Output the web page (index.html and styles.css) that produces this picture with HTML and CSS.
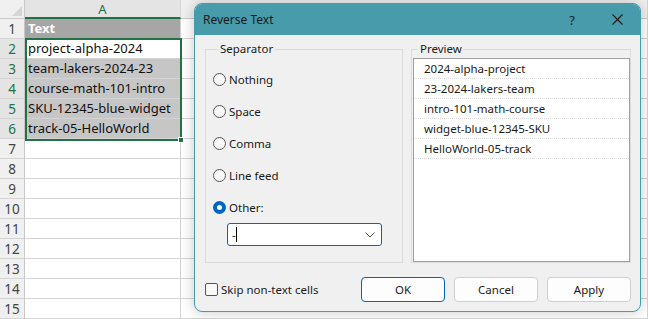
FILE: index.html
```html
<!DOCTYPE html>
<html lang="en">
<head>
  <meta charset="UTF-8">
  <title>Reverse Text</title>
  <link rel="stylesheet" href="styles.css">
</head>
<body>
  <!-- Worksheet -->
  <div class="sheet">
    <div class="corner"><svg width="10" height="10" viewBox="0 0 10 10"><path d="M10 0 L10 10 L0 10 Z" fill="#d6d6d6"/></svg></div>
    <div class="colhead sel">A</div>
    <div class="colhead"></div>

    <div class="rowhead">1</div><div class="cell head">Text</div><div class="cell"></div>
    <div class="rowhead sel">2</div><div class="cell">project-alpha-2024</div><div class="cell"></div>
    <div class="rowhead sel">3</div><div class="cell hl">team-lakers-2024-23</div><div class="cell"></div>
    <div class="rowhead sel">4</div><div class="cell hl">course-math-101-intro</div><div class="cell"></div>
    <div class="rowhead sel">5</div><div class="cell hl">SKU-12345-blue-widget</div><div class="cell"></div>
    <div class="rowhead sel">6</div><div class="cell hl">track-05-HelloWorld</div><div class="cell"></div>
    <div class="rowhead">7</div><div class="cell"></div><div class="cell"></div>
    <div class="rowhead">8</div><div class="cell"></div><div class="cell"></div>
    <div class="rowhead">9</div><div class="cell"></div><div class="cell"></div>
    <div class="rowhead">10</div><div class="cell"></div><div class="cell"></div>
    <div class="rowhead">11</div><div class="cell"></div><div class="cell"></div>
    <div class="rowhead">12</div><div class="cell"></div><div class="cell"></div>
    <div class="rowhead">13</div><div class="cell"></div><div class="cell"></div>
    <div class="rowhead">14</div><div class="cell"></div><div class="cell"></div>
    <div class="rowhead">15</div><div class="cell"></div><div class="cell"></div>
  </div>
  <div class="selection"><span class="fill-handle"></span></div>

  <!-- Dialog -->
  <div class="dialog">
    <div class="titlebar">
      <span class="title">Reverse Text</span>
      <span class="help">?</span>
      <span class="close">
        <svg width="11" height="11" viewBox="0 0 11 11"><path d="M0.5 0.5 L10.5 10.5 M10.5 0.5 L0.5 10.5" stroke="#1a1a1a" stroke-width="1.1" fill="none"/></svg>
      </span>
    </div>
    <div class="dialog-body">
      <div class="groups">
        <fieldset class="group separator">
          <legend>Separator</legend>
          <label class="radio"><span class="dot"></span>Nothing</label>
          <label class="radio"><span class="dot"></span>Space</label>
          <label class="radio"><span class="dot"></span>Comma</label>
          <label class="radio"><span class="dot"></span>Line feed</label>
          <label class="radio"><span class="dot on"></span>Other:</label>
          <div class="combo">
            <span class="combo-text">-<span class="caret"></span></span>
            <svg width="10" height="6" viewBox="0 0 10 6"><path d="M0.5 0.5 L5 5 L9.5 0.5" stroke="#555" stroke-width="1" fill="none"/></svg>
          </div>
        </fieldset>
        <fieldset class="group preview">
          <legend>Preview</legend>
          <ul class="listbox">
            <li>2024-alpha-project</li>
            <li>23-2024-lakers-team</li>
            <li>intro-101-math-course</li>
            <li>widget-blue-12345-SKU</li>
            <li>HelloWorld-05-track</li>
          </ul>
        </fieldset>
      </div>
      <div class="footer">
        <label class="check"><span class="box"></span>Skip non-text cells</label>
        <div class="buttons">
          <button class="btn default">OK</button>
          <button class="btn">Cancel</button>
          <button class="btn">Apply</button>
        </div>
      </div>
    </div>
  </div>
</body>
</html>
```

FILE: styles.css
```css
/* Sheet and dialog */
* {
  box-sizing: border-box;
}
body {
  margin: 0;
  width: 648px;
  height: 319px;
  overflow: hidden;
  position: relative;
  background: #fff;
  font-family: "Noto Sans", sans-serif;
}

/* Worksheet grid */
.sheet {
  display: grid;
  grid-template-columns: 25px 156px 1fr;
  grid-template-rows: 19px repeat(15, 20px);
}
.corner {
  background: #f0f0f0;
  border-right: 1px solid #c8c8c8;
  border-bottom: 1px solid #c8c8c8;
  display: flex;
  align-items: flex-end;
  justify-content: flex-end;
  padding: 0 2px 2px 0;
}
.colhead {
  background: #f0f0f0;
  border-right: 1px solid #d4d4d4;
  border-bottom: 1px solid #c8c8c8;
  text-align: center;
  font-size: 13px;
  line-height: 18px;
  color: #217346;
}
.colhead.sel {
  background: #e4e4e4;
  border-bottom: 2px solid #217346;
}
.rowhead {
  background: #f0f0f0;
  border-right: 1px solid #c8c8c8;
  border-bottom: 1px solid #d4d4d4;
  text-align: center;
  font-size: 13.5px;
  line-height: 20px;
  color: #444;
}
.rowhead.sel {
  background: #e4e4e4;
  color: #217346;
}
.cell {
  border-right: 1px solid #d4d4d4;
  border-bottom: 1px solid #d4d4d4;
  padding-left: 3px;
  font-size: 13px;
  line-height: 19px;
  color: #111;
  white-space: nowrap;
}
.cell.head {
  background: #a6a6a6;
  color: #fff;
  font-weight: bold;
}
.cell.hl {
  background: #c6c6c6;
}
.selection {
  position: absolute;
  left: 25px;
  top: 38px;
  width: 157px;
  height: 103px;
  border: 2px solid #217346;
}
.fill-handle {
  position: absolute;
  right: -4px;
  bottom: -4px;
  width: 6px;
  height: 6px;
  background: #217346;
  border: 1px solid #fff;
}

/* Dialog window */
.dialog {
  position: absolute;
  left: 194px;
  top: 3px;
  width: 447px;
  height: 309px;
  border: 1px solid #479bab;
  border-radius: 8px;
  background: #f0f0f0;
  box-shadow: 0 0 14px rgba(0,0,0,0.22);
  font-size: 11.5px;
  color: #1a1a1a;
  overflow: hidden;
}
.titlebar {
  height: 31px;
  background: #479bab;
  display: flex;
  align-items: center;
  padding-left: 8px;
}
.title {
  flex: 1;
  font-size: 12px;
}
.help {
  width: 20px;
  text-align: center;
  margin-right: 12px;
  font-size: 13px;
}
.close {
  width: 46px;
  display: flex;
  justify-content: center;
}
.dialog-body {
  padding: 6px 9px 9px 10px;
}
.groups {
  display: flex;
  gap: 8px;
  height: 222px;
}
.group {
  margin: 0;
  padding: 0;
  border: 1px solid #dcdcdc;
  min-width: 0;
}
.group legend {
  margin-left: 5px;
  padding: 0 2px;
  line-height: 16px;
}
.separator {
  width: 198px;
  padding: 6px 0 0 7px;
}
.preview {
  width: 220px;
  padding: 1px 0 0 1px;
}
.radio {
  display: flex;
  align-items: center;
  height: 32px;
  gap: 3px;
}
.dot {
  width: 13px;
  height: 13px;
  border: 1px solid #555;
  border-radius: 50%;
  background: #f8f8f8;
}
.dot.on {
  border: 4px solid #0067c0;
  background: #fff;
}
.combo {
  margin-left: 14px;
  width: 155px;
  height: 23px;
  border: 1px solid #0067c0;
  border-radius: 3px;
  background: #fff;
  display: flex;
  align-items: center;
  justify-content: space-between;
  padding: 0 6px 0 4px;
}
.combo-text {
  display: flex;
  align-items: center;
}
.caret {
  display: inline-block;
  width: 1px;
  height: 15px;
  background: #000;
}
.listbox {
  list-style: none;
  margin: 0;
  padding: 0;
  height: 204px;
  border: 1px solid #a0a0a0;
  background: #fff;
}
.listbox li {
  height: 20px;
  line-height: 19px;
  padding-left: 10px;
  border-bottom: 1px dotted #dcdcdc;
}
.footer {
  margin-top: 14px;
  display: flex;
  align-items: center;
  justify-content: space-between;
}
.check {
  display: flex;
  align-items: center;
  gap: 3px;
}
.box {
  width: 13px;
  height: 13px;
  border: 1px solid #555;
  border-radius: 2px;
  background: #f8f8f8;
}
.buttons {
  display: flex;
  gap: 9px;
}
.btn {
  width: 84px;
  height: 25px;
  font-family: "Noto Sans", sans-serif;
  font-size: 11.5px;
  color: #1a1a1a;
  background: #fdfdfd;
  border: 1px solid #d0d0d0;
  border-radius: 4px;
}
.btn.default {
  border-color: #0067c0;
}
```
